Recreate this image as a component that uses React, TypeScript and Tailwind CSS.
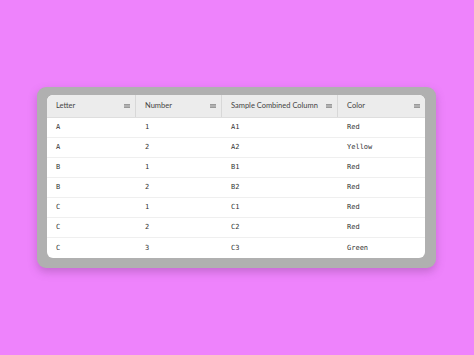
const columns = ['Letter', 'Number', 'Sample Combined Column', 'Color'];

const rows = [
  ['A', '1', 'A1', 'Red'],
  ['A', '2', 'A2', 'Yellow'],
  ['B', '1', 'B1', 'Red'],
  ['B', '2', 'B2', 'Red'],
  ['C', '1', 'C1', 'Red'],
  ['C', '2', 'C2', 'Red'],
  ['C', '3', 'C3', 'Green'],
];

const widths = ['w-[89px]', 'w-[86px]', 'w-[116px]', 'w-[87px]'];

const MenuIcon = () => (
  <svg width="6" height="4" viewBox="0 0 6 4" className="shrink-0">
    <rect x="0" y="0" width="6" height="4" fill="#9a9a9a" />
    <rect x="0" y="1" width="6" height="0.5" fill="#c8c8c8" />
    <rect x="0" y="2.5" width="6" height="0.5" fill="#c8c8c8" />
  </svg>
);

export default function App() {
  return (
    <div className="w-[474px] h-[355px] bg-[#ee83fc] pt-[87px] pl-[37px]">
      <div className="w-[399px] h-[181px] bg-[#b0b0b0] rounded-[9px] shadow-[0_4px_8px_rgba(120,60,130,0.35)] pt-[8px] pl-[10px]">
        <div className="w-[378px] bg-white rounded-[6px] overflow-hidden">
          <div className="flex h-[23px] bg-[#ececec] border-b border-[#dedede]">
            {columns.map((c, i) => (
              <div
                key={c}
                className={`${widths[i]} flex items-center justify-between pl-[9px] pr-[5px] ${i < 3 ? 'border-r border-[#d8d8d8]' : ''}`}
              >
                <span className="text-[7.5px] text-[#444] font-['Lato',sans-serif]">{c}</span>
                <MenuIcon />
              </div>
            ))}
          </div>
          {rows.map((r, ri) => (
            <div key={ri} className={`flex h-[20px] ${ri < rows.length - 1 ? 'border-b border-[#efefef]' : ''}`}>
              {r.map((v, i) => (
                <div
                  key={i}
                  className={`${widths[i]} flex items-center pl-[9px] text-[7px] text-[#333] font-['DejaVu_Sans_Mono',monospace]`}
                >
                  {v}
                </div>
              ))}
            </div>
          ))}
        </div>
      </div>
    </div>
  );
}
